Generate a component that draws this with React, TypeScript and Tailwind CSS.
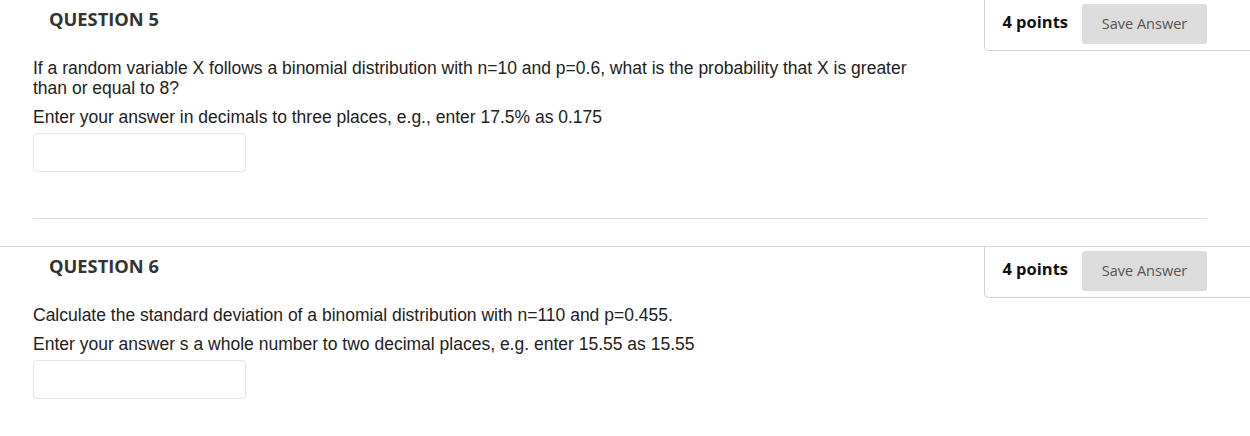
type QuestionProps = {
  num: number;
  points: number;
  paragraphs: string[];
  first?: boolean;
};

const Question = ({ num, points, paragraphs, first }: QuestionProps) => {
  return (
    <section
      className={
        first
          ? "-mt-px border-t border-[#d6d6d6]"
          : "border-t border-[#d6d6d6]"
      }
    >
      <div className="flex items-start justify-between">
        <h2 className="pl-[49px] pt-[7px] font-['Open_Sans',sans-serif] text-[18.3px] font-bold leading-[24px] text-[#333]">
          QUESTION {num}
        </h2>
        <div className="flex items-center gap-[14px] rounded-bl-[5px] border-b border-l border-[#d2d2d2] pb-[6px] pl-[17px] pr-[43px] pt-[4px] font-['Open_Sans',sans-serif]">
          <span className="mb-[4px] text-[16.5px] font-bold text-[#111]">
            {points} points
          </span>
          <button className="h-[40px] w-[125px] rounded-[3px] bg-[#dcdcdc] text-[14.5px] text-[#555]">
            Save Answer
          </button>
        </div>
      </div>

      <div className="pl-[33px] pt-[7px] font-['Liberation_Sans',Arial,sans-serif] text-[17.5px] leading-[20px] text-[#222]">
        <div className="w-[884px]">
          {paragraphs.map((p) => (
            <p key={p} className="mb-[9px]">
              {p}
            </p>
          ))}
        </div>
        <input
          type="text"
          className="mt-[-3px] block h-[39px] w-[213px] rounded-[4px] border border-[#e4e4e4] bg-white px-2"
        />
      </div>
      <div className="ml-[33px] mr-[43px] mt-[46px] border-t border-[#dcdcdc]" />
      <div className="h-[27px]" />
    </section>
  );
};

export default function App() {
  return (
    <div className="h-[436px] w-[1250px] overflow-hidden bg-white">
      <Question
        first
        num={5}
        points={4}
        paragraphs={[
          "If a random variable X follows a binomial distribution with n=10 and p=0.6, what is the probability that X is greater than or equal to 8?",
          "Enter your answer in decimals to three places, e.g., enter 17.5% as 0.175",
        ]}
      />
      <Question
        num={6}
        points={4}
        paragraphs={[
          "Calculate the standard deviation of a binomial distribution with n=110 and p=0.455.",
          "Enter your answer s a whole number to two decimal places, e.g. enter 15.55 as 15.55",
        ]}
      />
    </div>
  );
}
